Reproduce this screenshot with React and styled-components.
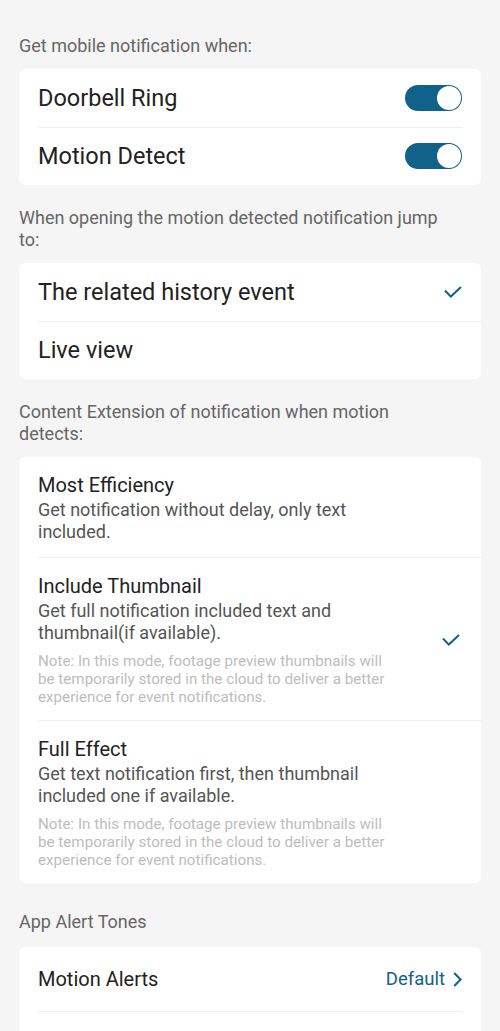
import React from "react";
import styled, { createGlobalStyle } from "styled-components";

const GlobalStyle = createGlobalStyle`
  body {
    margin: 0;
    background: #f5f5f5;
    font-family: Roboto, "Noto Sans", sans-serif;
  }
`;

const ACCENT = "#10628a";

const Page = styled.div`
  padding: 0 19px 40px;
`;

const SectionTitle = styled.div`
  max-width: 430px;
  padding: ${(p) => p.$top || 22}px 0 ${(p) => p.$bottom || 12}px;
  font-size: 18px;
  line-height: 22px;
  color: #666;
`;

const Card = styled.div`
  background: #fff;
  border-radius: 6px;
  overflow: hidden;
`;

const Row = styled.div`
  display: flex;
  align-items: center;
  justify-content: space-between;
  height: ${(p) => p.$height || 57.5}px;
  padding: 0 19px;
`;

const RowLabel = styled.span`
  font-size: ${(p) => p.$size || 23.5}px;
  color: #222;
`;

const Divider = styled.div`
  height: 1px;
  background: #efefef;
  margin: 0 ${(p) => (p.$full ? 0 : 19)}px 0 19px;
`;

const Switch = styled.span`
  position: relative;
  width: 57px;
  height: 26px;
  border-radius: 13px;
  background: ${ACCENT};
  &::after {
    content: "";
    position: absolute;
    top: 1px;
    right: 1px;
    width: 24px;
    height: 24px;
    border-radius: 50%;
    background: #fff;
  }
`;

const OptionRow = styled.div`
  display: flex;
  align-items: center;
  padding: 16px 21px 14px 19px;
`;

const OptionText = styled.div`
  flex: 1;
  max-width: 362px;
`;

const OptionTitle = styled.div`
  font-size: 20px;
  line-height: 24px;
  color: #222;
`;

const OptionDesc = styled.div`
  margin-top: 2px;
  font-size: 18px;
  line-height: 22px;
  color: #555;
`;

const OptionNote = styled.div`
  max-width: 356px;
  margin-top: 8px;
  font-size: 15.2px;
  line-height: 18px;
  color: #bdbdbd;
`;

const CheckBox = styled.span`
  display: flex;
  margin-left: auto;
`;

const Value = styled.span`
  display: flex;
  align-items: center;
  gap: 8px;
  font-size: 18.5px;
  color: ${ACCENT};
`;

function Check() {
  return (
    <CheckBox>
      <svg width="18" height="12" viewBox="0 0 18 12" fill="none">
        <path d="M1 4.5 L6.8 10.6 L17 1" stroke={ACCENT} strokeWidth="2" />
      </svg>
    </CheckBox>
  );
}

function Chevron() {
  return (
    <svg width="9" height="15" viewBox="0 0 9 15" fill="none">
      <path d="M1.2 1 L7.6 7.5 L1.2 14" stroke={ACCENT} strokeWidth="2" />
    </svg>
  );
}

const NOTE =
  "Note: In this mode, footage preview thumbnails will be temporarily stored in the cloud to deliver a better experience for event notifications.";

const options = [
  {
    title: "Most Efficiency",
    desc: "Get notification without delay, only text included.",
  },
  {
    title: "Include Thumbnail",
    desc: "Get full notification included text and thumbnail(if available).",
    note: NOTE,
    checked: true,
  },
  {
    title: "Full Effect",
    desc: "Get text notification first, then thumbnail included one if available.",
    note: NOTE,
  },
];

export default function App() {
  return (
    <Page>
      <GlobalStyle />
      <SectionTitle $top={35}>Get mobile notification when:</SectionTitle>
      <Card>
        <Row>
          <RowLabel>Doorbell Ring</RowLabel>
          <Switch />
        </Row>
        <Divider />
        <Row>
          <RowLabel>Motion Detect</RowLabel>
          <Switch />
        </Row>
      </Card>

      <SectionTitle>When opening the motion detected notification jump to:</SectionTitle>
      <Card>
        <Row>
          <RowLabel>The related history event</RowLabel>
          <Check />
        </Row>
        <Divider $full />
        <Row>
          <RowLabel>Live view</RowLabel>
        </Row>
      </Card>

      <SectionTitle>Content Extension of notification when motion detects:</SectionTitle>
      <Card>
        {options.map((o, i) => (
          <React.Fragment key={o.title}>
            {i > 0 && <Divider $full />}
            <OptionRow>
              <OptionText>
                <OptionTitle>{o.title}</OptionTitle>
                <OptionDesc>{o.desc}</OptionDesc>
                {o.note && <OptionNote>{o.note}</OptionNote>}
              </OptionText>
              {o.checked && <Check />}
            </OptionRow>
          </React.Fragment>
        ))}
      </Card>

      <SectionTitle $top={28} $bottom={14}>App Alert Tones</SectionTitle>
      <Card>
        <Row $height={64}>
          <RowLabel $size={20}>Motion Alerts</RowLabel>
          <Value>
            Default
            <Chevron />
          </Value>
        </Row>
        <Divider />
        <Row $height={64} />
      </Card>
    </Page>
  );
}
